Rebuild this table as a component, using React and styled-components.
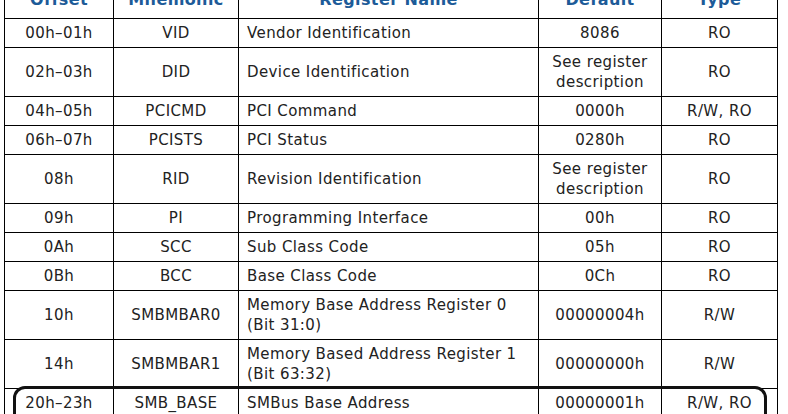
import React from 'react';
import styled, { createGlobalStyle } from 'styled-components';

const GlobalStyle = createGlobalStyle`
  html, body {
    margin: 0;
    padding: 0;
    background: #ffffff;
    overflow: hidden;
  }
`;

const Page = styled.div`
  position: relative;
  width: 788px;
  height: 414px;
  overflow: hidden;
  background: #ffffff;
`;

const Table = styled.table`
  border-collapse: collapse;
  margin: -11px 0 0 4px;
  table-layout: fixed;
  width: 773px;
  font-family: "DejaVu Sans", Verdana, sans-serif;
  font-size: 15px;
  letter-spacing: 0.4px;
  color: #222;
`;

const Head = styled.th`
  border: 1px solid #000;
  color: #1d5b98;
  font-weight: bold;
  font-size: 16px;
  height: 20px;
  padding: 0 6px 8px;
  text-align: center;
  line-height: 20px;
`;

const Cell = styled.td`
  border: 1px solid #000;
  padding: 4px 8px;
  line-height: 20px;
  text-align: ${(p) => (p.$left ? 'left' : 'center')};
  vertical-align: middle;
  white-space: nowrap;
`;

const Highlight = styled.div`
  position: absolute;
  left: 13px;
  top: 386px;
  width: 748px;
  height: 60px;
  border: 3px solid #111;
  border-radius: 12px;
  pointer-events: none;
`;

const rows = [
  ['00h–01h', 'VID', ['Vendor Identification'], ['8086'], 'RO'],
  ['02h–03h', 'DID', ['Device Identification'], ['See register', 'description'], 'RO'],
  ['04h–05h', 'PCICMD', ['PCI Command'], ['0000h'], 'R/W, RO'],
  ['06h–07h', 'PCISTS', ['PCI Status'], ['0280h'], 'RO'],
  ['08h', 'RID', ['Revision Identification'], ['See register', 'description'], 'RO'],
  ['09h', 'PI', ['Programming Interface'], ['00h'], 'RO'],
  ['0Ah', 'SCC', ['Sub Class Code'], ['05h'], 'RO'],
  ['0Bh', 'BCC', ['Base Class Code'], ['0Ch'], 'RO'],
  ['10h', 'SMBMBAR0', ['Memory Base Address Register 0', '(Bit 31:0)'], ['00000004h'], 'R/W'],
  ['14h', 'SMBMBAR1', ['Memory Based Address Register 1', '(Bit 63:32)'], ['00000000h'], 'R/W'],
  ['20h–23h', 'SMB_BASE', ['SMBus Base Address'], ['00000001h'], 'R/W, RO'],
];

const Lines = ({ parts }) =>
  parts.map((t, i) => (
    <React.Fragment key={i}>
      {i > 0 && <br />}
      {t}
    </React.Fragment>
  ));

export default function App() {
  return (
    <Page>
      <GlobalStyle />
      <Table>
        <colgroup>
          <col style={{ width: 109 }} />
          <col style={{ width: 125 }} />
          <col style={{ width: 300 }} />
          <col style={{ width: 123 }} />
          <col style={{ width: 116 }} />
        </colgroup>
        <thead>
          <tr>
            <Head>Offset</Head>
            <Head>Mnemonic</Head>
            <Head>Register Name</Head>
            <Head>Default</Head>
            <Head>Type</Head>
          </tr>
        </thead>
        <tbody>
          {rows.map(([off, mn, name, def, type]) => (
            <tr key={off}>
              <Cell>{off}</Cell>
              <Cell>{mn}</Cell>
              <Cell $left>
                <Lines parts={name} />
              </Cell>
              <Cell>
                <Lines parts={def} />
              </Cell>
              <Cell>{type}</Cell>
            </tr>
          ))}
        </tbody>
      </Table>
      <Highlight />
    </Page>
  );
}
